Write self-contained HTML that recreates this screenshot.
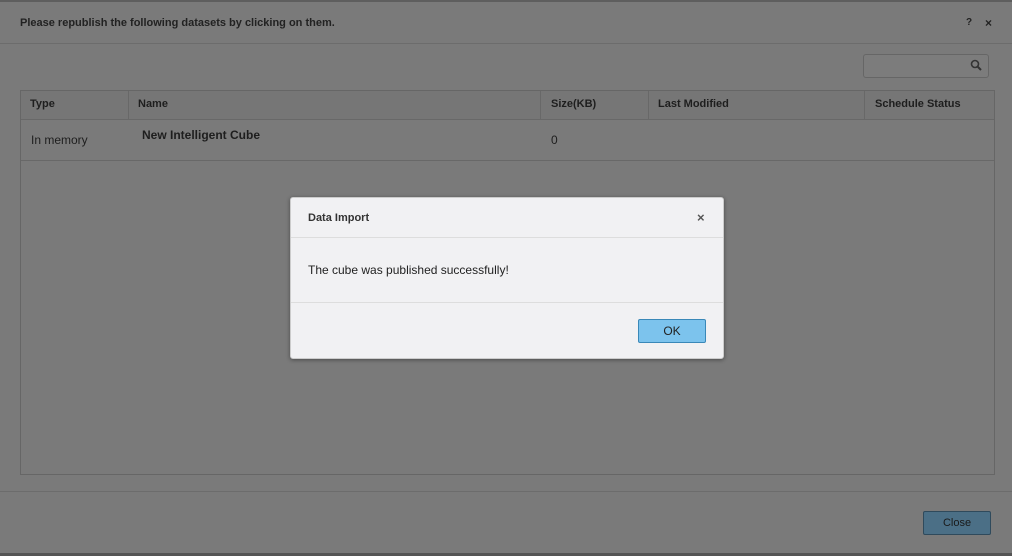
<!DOCTYPE html>
<html><head><style>
*{margin:0;padding:0;box-sizing:border-box}
body{width:1012px;height:556px;background:#7a7a7a;font-family:"Liberation Sans",Arial,sans-serif;position:relative;overflow:hidden;color:#1e1e1e}
.a{position:absolute}
</style></head><body>
<div class="a" style="left:0;top:0;width:1012px;height:2px;background:#5e5e5e"></div>
<div class="a" style="left:0;top:553px;width:1012px;height:3px;background:#555"></div>
<div class="a" style="left:20px;top:17px;font-size:11px;font-weight:bold;color:#222">Please republish the following datasets by clicking on them.</div>
<div class="a" style="left:966px;top:17px;font-size:10px;font-weight:bold;color:#222">?</div>
<div class="a" style="left:985px;top:16px;font-size:12px;font-weight:bold;color:#222">×</div>
<div class="a" style="left:0;top:43px;width:1012px;height:1px;background:#6c6c6c"></div>
<div class="a" style="left:863px;top:54px;width:126px;height:24px;border:1px solid #666;border-radius:3px;background:#7c7c7c"></div>
<svg class="a" style="left:970px;top:59px" width="12" height="12" viewBox="0 0 12 12"><circle cx="5" cy="5" r="3.5" fill="none" stroke="#333" stroke-width="1.6"/><path d="M7.5 7.5L11 11" stroke="#333" stroke-width="2"/></svg>
<div class="a" style="left:20px;top:90px;width:975px;height:385px;border:1px solid #666"></div>
<div class="a" style="left:21px;top:91px;width:973px;height:29px;background:#767676;border-bottom:1px solid #686868"></div>
<div class="a" style="left:21px;top:160px;width:973px;height:1px;background:#686868"></div>
<div class="a" style="left:128px;top:91px;width:1px;height:29px;background:#686868"></div>
<div class="a" style="left:540px;top:91px;width:1px;height:29px;background:#686868"></div>
<div class="a" style="left:648px;top:91px;width:1px;height:29px;background:#686868"></div>
<div class="a" style="left:864px;top:91px;width:1px;height:29px;background:#686868"></div>
<div class="a" style="left:30px;top:98px;font-size:11px;font-weight:bold;line-height:13px">Type</div>
<div class="a" style="left:138px;top:98px;font-size:11px;font-weight:bold;line-height:13px">Name</div>
<div class="a" style="left:551px;top:98px;font-size:11px;font-weight:bold;line-height:13px">Size(KB)</div>
<div class="a" style="left:658px;top:98px;font-size:11px;font-weight:bold;line-height:13px">Last Modified</div>
<div class="a" style="left:875px;top:98px;font-size:11px;font-weight:bold;line-height:13px">Schedule Status</div>
<div class="a" style="left:31px;top:133px;font-size:12px">In memory</div>
<div class="a" style="left:142px;top:128px;font-size:12px;font-weight:bold">New Intelligent Cube</div>
<div class="a" style="left:551px;top:133px;font-size:12px">0</div>
<div class="a" style="left:0;top:491px;width:1012px;height:1px;background:#6c6c6c"></div>
<div class="a" style="left:923px;top:511px;width:68px;height:24px;background:#4b6f86;border:1px solid #2f4a5c;border-radius:2px;font-size:11px;text-align:center;line-height:22px;color:#1a1a1a">Close</div>

<div class="a" style="left:290px;top:197px;width:434px;height:162px;background:#f1f1f3;border:1px solid #ccc;border-radius:3px;box-shadow:0 1px 4px rgba(0,0,0,.4)"></div>
<div class="a" style="left:308px;top:212px;font-size:11px;font-weight:bold;color:#333">Data Import</div>
<div class="a" style="left:697px;top:210px;font-size:13px;font-weight:bold;color:#555">×</div>
<div class="a" style="left:291px;top:237px;width:432px;height:1px;background:#ddd"></div>
<div class="a" style="left:308px;top:263px;font-size:12px;color:#222">The cube was published successfully!</div>
<div class="a" style="left:291px;top:302px;width:432px;height:1px;background:#ddd"></div>
<div class="a" style="left:638px;top:319px;width:68px;height:24px;background:#7cc3ed;border:1px solid #3a88b8;border-radius:2px;font-size:12px;text-align:center;line-height:22px;color:#222">OK</div>
</body></html>
